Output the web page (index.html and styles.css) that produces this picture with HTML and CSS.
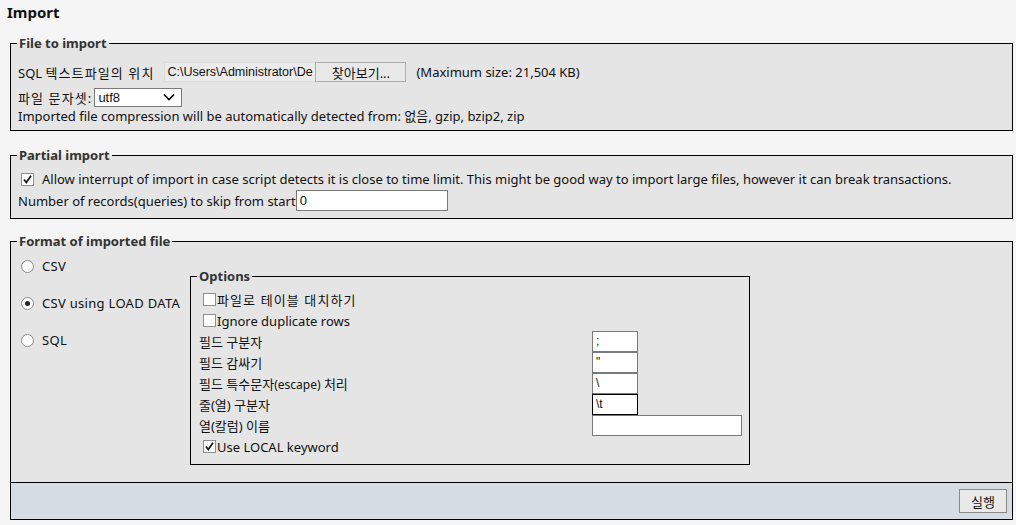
FILE: index.html
```html
<!DOCTYPE html>
<html lang="ko">
<head>
<meta charset="utf-8">
<title>Import</title>
<link rel="stylesheet" href="styles.css">
</head>
<body>
<h2 class="title">Import</h2>

<fieldset class="box box-file">
  <legend>File to import</legend>
  <div class="row row-file">
    <span class="lbl">SQL <span class="ko">텍스트파일의 위치</span></span>
    <span class="file">
      <span class="file-path">C:\Users\Administrator\De</span>
      <span class="btn file-btn">찾아보기...</span>
    </span>
    <span class="maxsize">(Maximum size: 21,504 KB)</span>
  </div>
  <div class="row row-charset">
    <span class="lbl ko">파일 문자셋:</span>
    <span class="select">
      <span class="select-val">utf8</span>
      <svg class="chev" width="12" height="8" viewBox="0 0 12 8"><path d="M1 1.5 L6 6.5 L11 1.5" fill="none" stroke="#000" stroke-width="1.6"/></svg>
    </span>
  </div>
  <div class="row row-note">Imported file compression will be automatically detected from: 없음, gzip, bzip2, zip</div>
</fieldset>

<fieldset class="box box-partial">
  <legend>Partial import</legend>
  <div class="row row-check">
    <span class="cb checked"><svg width="11" height="11" viewBox="0 0 11 11"><path d="M2 5.5 L4.3 8.5 L9 1.8" fill="none" stroke="#1a1a1a" stroke-width="1.8"/></svg></span>
    <span class="cb-text">Allow interrupt of import in case script detects it is close to time limit. This might be good way to import large files, however it can break transactions.</span>
  </div>
  <div class="row row-skip">
    <span class="lbl">Number of records(queries) to skip from start</span>
    <span class="inp inp-skip">0</span>
  </div>
</fieldset>

<fieldset class="box box-format">
  <legend>Format of imported file</legend>
  <div class="format-body">
    <div class="radios">
      <div class="radio-row"><span class="rd"></span><span>CSV</span></div>
      <div class="radio-row"><span class="rd on"></span><span>CSV using LOAD DATA</span></div>
      <div class="radio-row"><span class="rd"></span><span>SQL</span></div>
    </div>
    <fieldset class="options">
      <legend>Options</legend>
      <div class="opt-grid">
        <div class="opt-row opt-cb"><span class="cb"></span><span class="ko">파일로 테이블 대치하기</span></div>
        <div class="opt-row opt-cb"><span class="cb"></span><span>Ignore duplicate rows</span></div>
        <div class="opt-row"><span class="opt-lbl">필드 구분자</span><span class="inp inp-s">;</span></div>
        <div class="opt-row"><span class="opt-lbl">필드 감싸기</span><span class="inp inp-s">"</span></div>
        <div class="opt-row"><span class="opt-lbl">필드 특수문자<span class="esc">(escape)</span> 처리</span><span class="inp inp-s">\</span></div>
        <div class="opt-row"><span class="opt-lbl">줄(열) 구분자</span><span class="inp inp-s inp-focus">\t</span></div>
        <div class="opt-row"><span class="opt-lbl">열(칼럼) 이름</span><span class="inp inp-w"></span></div>
        <div class="opt-row opt-cb"><span class="cb checked"><svg width="11" height="11" viewBox="0 0 11 11"><path d="M2 5.5 L4.3 8.5 L9 1.8" fill="none" stroke="#1a1a1a" stroke-width="1.8"/></svg></span><span>Use LOCAL keyword</span></div>
      </div>
    </fieldset>
  </div>
</fieldset>
<div class="footer">
  <span class="btn go-btn">실행</span>
</div>
</body>
</html>
```

FILE: styles.css
```css
html, body {
  margin: 0;
  background: #f5f5f5;
}
body {
  padding: 0 3px 0 7px;
  font-family: "Noto Sans", "Noto Sans CJK KR", sans-serif;
  font-size: 13px;
  color: #111;
}
.ko { letter-spacing: 1.1px; }
.title {
  margin: 0 0 14px 0;
  padding-top: 3px;
  font-size: 15px;
  line-height: 18px;
  font-weight: bold;
}
.box {
  margin: 0 0 0 3px;
  padding: 0 7px;
  border: 1px solid #000;
  background: #e5e5e5;
  min-width: 0;
}
legend {
  padding: 0 2px;
  margin-left: -1px;
  font-weight: bold;
  line-height: 16px;
  color: #333;
}
.row {
  display: flex;
  align-items: center;
  white-space: nowrap;
}

/* file */
.box-file { padding-top: 10px; padding-bottom: 6px; }
.row-file { height: 22px; }
.row-file .lbl { margin-right: 10px; }
.file { display: flex; height: 20px; }
.file-path {
  width: 148px;
  overflow: hidden;
  background: #ebebeb;
  border: 1px solid #dcdcdc;
  border-right: none;
  font-family: "Liberation Sans", Arial, sans-serif;
  font-size: 12.5px;
  line-height: 18px;
  padding-left: 2px;
  white-space: nowrap;
}
.btn {
  display: inline-flex;
  align-items: center;
  justify-content: center;
  background: #e8e8e8;
  border: 1px solid #adadad;
  box-sizing: border-box;
}
.file-btn { width: 91px; height: 20px; }
.maxsize { margin-left: 10px; }
.row-charset { height: 20px; margin-top: 4px; }
.row-charset .lbl { margin-right: 2px; }
.select {
  display: flex;
  align-items: center;
  justify-content: space-between;
  box-sizing: border-box;
  width: 88px;
  height: 19px;
  background: #fff;
  border: 1px solid #7a7a7a;
  padding: 0 6px 0 3px;
  font-family: "Liberation Sans", Arial, sans-serif;
  font-size: 13px;
}
.row-note { height: 17px; }

/* checkbox & radio */
.cb {
  display: inline-flex;
  align-items: center;
  justify-content: center;
  box-sizing: border-box;
  width: 13px;
  height: 13px;
  border: 1px solid #8f8f8f;
  background: #fff;
  flex: none;
}
.rd {
  display: inline-flex;
  align-items: center;
  justify-content: center;
  box-sizing: border-box;
  width: 13px;
  height: 13px;
  border: 1px solid #8a8a8a;
  border-radius: 50%;
  background: #fdfdfd;
  flex: none;
}
.rd.on::after {
  content: "";
  width: 5px;
  height: 5px;
  border-radius: 50%;
  background: #222;
}

/* partial */
.box-partial { margin-top: 16px; padding-top: 7px; padding-bottom: 7px; }
.row-check { height: 18px; padding-left: 3px; }
.row-check .cb-text { margin-left: 8px; }
.row-skip { height: 21px; margin-top: 2px; }
.row-skip .lbl { margin-right: 0; }
.inp {
  display: inline-flex;
  align-items: center;
  box-sizing: border-box;
  height: 21px;
  background: #fff;
  border: 1px solid #7a7a7a;
  padding-left: 3px;
  font-family: "Liberation Sans", Arial, sans-serif;
  font-size: 13px;
}
.inp-skip { width: 152px; }

/* format */
.box-format {
  margin-top: 14px;
  padding-top: 7px;
  padding-bottom: 17px;
}
.format-body {
  display: flex;
  align-items: flex-start;
}
.radios {
  width: 172px;
  flex: none;
  display: flex;
  flex-direction: column;
  gap: 17px;
}
.radio-row {
  display: flex;
  align-items: center;
  height: 20px;
  padding-left: 3px;
  gap: 8px;
  letter-spacing: 0.3px;
}
.options {
  margin: 12px 0 0 0;
  width: 560px;
  box-sizing: border-box;
  padding: 5px 7px 7px 7px;
  border: 1px solid #000;
  background: #e5e5e5;
  min-width: 0;
}
.opt-grid {
  display: flex;
  flex-direction: column;
}
.opt-row {
  display: flex;
  align-items: center;
  height: 21px;
  white-space: nowrap;
}
.opt-cb { padding-left: 5px; }
.opt-cb .cb { margin-right: 1px; }
.opt-lbl { width: 394px; padding-left: 1px; box-sizing: border-box; flex: none; }
.esc { font-size: 12px; }
.inp-s { width: 46px; align-items: flex-start; padding-top: 2px; font-size: 12px; }
.inp-focus { border-color: #000; }
.inp-w { width: 152px; }

/* footer */
.footer {
  margin-left: 3px;
  display: flex;
  justify-content: flex-end;
  align-items: center;
  height: 36px;
  padding-right: 5px;
  border: 1px solid #000;
  border-top: none;
  background: #d5dce3;
}
.go-btn {
  width: 48px;
  height: 24px;
  background: #e9e9e9;
  border: 1px solid #8a8a8a;
  font-size: 13px;
}
```
